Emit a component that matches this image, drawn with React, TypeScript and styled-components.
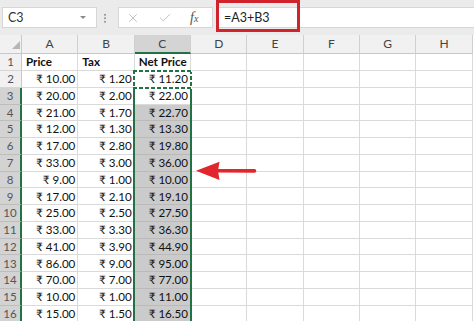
import React from "react";
import styled, { createGlobalStyle, css } from "styled-components";
import { X, Check } from "lucide-react";

const GREEN = "#217346";
const ROW_H = 16.77;
const COL_W = 56.35;
const FONT = `"Lato", "Noto Sans", "DejaVu Sans", sans-serif`;

const Global = createGlobalStyle`
  *, *::before, *::after { box-sizing: border-box; }
  html, body { margin: 0; padding: 0; background: #fff; }
  body { font-family: ${FONT}; }
`;

const Page = styled.div`
  position: relative;
  width: 474px;
  height: 321px;
  overflow: hidden;
  background: #fff;
`;

const Toolbar = styled.div`
  display: flex;
  align-items: center;
  height: 35px;
  padding-left: 2px;
  background: #ebebeb;
`;

const NameBox = styled.div`
  display: flex;
  align-items: center;
  width: 95px;
  height: 21px;
  padding-left: 5px;
  background: #fff;
  border: 1px solid #d6d6d6;
  font-size: 12.5px;
  color: #333;
`;

const Caret = styled.span`
  margin-left: auto;
  margin-right: 10px;
  width: 0;
  height: 0;
  border-left: 3px solid transparent;
  border-right: 3px solid transparent;
  border-top: 3px solid #8a8a8a;
`;

const Grip = styled.span`
  width: 2px;
  height: 10px;
  margin: 0 12px 0 7px;
  background: radial-gradient(circle, #9c9c9c 0.8px, transparent 1.2px) 0 0 / 2px 3.5px repeat-y;
`;

const FuncBox = styled.div`
  display: flex;
  align-items: center;
  gap: 18px;
  width: 95px;
  height: 21px;
  padding-left: 7px;
  background: #fff;
  border: 1px solid #d6d6d6;
  color: #a6a6a6;
`;

const Fx = styled.span`
  display: inline-flex;
  align-items: baseline;
  width: 12px;
  font-family: "Liberation Serif", "DejaVu Serif", serif;
  font-style: italic;
  font-size: 14px;
  color: #555;
  line-height: 1;

  & > small {
    font-size: 10px;
  }
`;

const FormulaBox = styled.div`
  display: flex;
  align-items: center;
  flex: 1;
  height: 21px;
  margin-left: 4px;
  padding-left: 6px;
  background: #fff;
  border: 1px solid #d6d6d6;
  border-right: none;
  font-size: 12.5px;
  color: #222;
`;

const gridTemplate = css`
  display: grid;
  grid-template-columns: 22px repeat(8, ${COL_W}px);
  grid-template-rows: 19.3px repeat(16, ${ROW_H}px);
`;

const SheetStack = styled.div`
  display: grid;
`;

const Sheet = styled.div`
  ${gridTemplate};
  grid-area: 1 / 1;
  font-size: 11.6px;
  line-height: 1;
  color: #111;
`;

const OverlayLayer = styled.div`
  ${gridTemplate};
  grid-area: 1 / 1;
  z-index: 2;
  pointer-events: none;
`;

const Corner = styled.div`
  position: relative;
  background: #f1f1f1;
  border-right: 1px solid #c8c8c8;
  border-bottom: 1px solid #c8c8c8;

  &::after {
    content: "";
    position: absolute;
    right: 1px;
    bottom: 4px;
    border-left: 8px solid transparent;
    border-bottom: 8px solid #b6b6b6;
  }
`;

const ColHeader = styled.div<{ $active?: boolean }>`
  display: flex;
  align-items: center;
  justify-content: center;
  background: ${(p) => (p.$active ? "#d4d4d4" : "#f1f1f1")};
  border-right: 1px solid #d0d0d0;
  border-bottom: ${(p) => (p.$active ? `2px solid ${GREEN}` : "1px solid #c8c8c8")};
  font-size: 12px;
  color: #444;
`;

const RowHeader = styled.div<{ $selected?: boolean }>`
  display: flex;
  align-items: center;
  justify-content: center;
  background: ${(p) => (p.$selected ? "#d3d3d3" : "#f1f1f1")};
  border-right: ${(p) => (p.$selected ? `2px solid ${GREEN}` : "1px solid #c8c8c8")};
  border-bottom: 1px solid ${(p) => (p.$selected ? "#bdbdbd" : "#d6d6d6")};
  font-size: 11.5px;
  color: #555;
`;

const Cell = styled.div<{ $left?: boolean; $bold?: boolean; $shaded?: boolean }>`
  display: flex;
  align-items: center;
  justify-content: ${(p) => (p.$left ? "flex-start" : "flex-end")};
  padding: 0 2px 0 4px;
  background: ${(p) => (p.$shaded ? "#cbcbcb" : "#fff")};
  border-right: 1px solid ${(p) => (p.$shaded ? "#bababa" : "#dadada")};
  border-bottom: 1px solid ${(p) => (p.$shaded ? "#bababa" : "#dadada")};
  font-weight: ${(p) => (p.$bold ? 700 : 400)};
  white-space: nowrap;
  overflow: hidden;
`;

const SelectionFrame = styled.div`
  grid-column: 4;
  grid-row: 4 / 18;
  margin: 0 -0.5px 0 -1.5px;
  border-left: 2px solid ${GREEN};
  border-right: 2px solid ${GREEN};
`;

const dashH = `repeating-linear-gradient(90deg, ${GREEN} 0 4px, #fff 4px 6px)`;
const dashV = `repeating-linear-gradient(180deg, ${GREEN} 0 4px, #fff 4px 6px)`;

const Marquee = styled.div`
  grid-column: 4;
  grid-row: 3;
  margin: -1px -0.5px -1px -1.5px;
  background:
    ${dashH} left top / 100% 2px no-repeat,
    ${dashH} left bottom / 100% 2px no-repeat,
    ${dashV} left top / 2px 100% no-repeat,
    ${dashV} right top / 2px 100% no-repeat;
`;

const RedBox = styled.div`
  position: absolute;
  left: 216px;
  top: 0px;
  width: 84px;
  height: 32px;
  border: 3px solid #d0232b;
  pointer-events: none;
`;

const ArrowSvg = styled.svg`
  position: absolute;
  left: 190px;
  top: 158px;
  pointer-events: none;
`;

const columns = ["A", "B", "C", "D", "E", "F", "G", "H"];

const data: [number, number, number][] = [
  [10, 1.2, 11.2],
  [20, 2, 22],
  [21, 1.7, 22.7],
  [12, 1.3, 13.3],
  [17, 2.8, 19.8],
  [33, 3, 36],
  [9, 1, 10],
  [17, 2.1, 19.1],
  [25, 2.5, 27.5],
  [33, 3.3, 36.3],
  [41, 3.9, 44.9],
  [86, 9, 95],
  [70, 7, 77],
  [10, 1, 11],
  [15, 1.5, 16.5],
];

const rupee = (v: number) => `₹ ${v.toFixed(2)}`;

export default function App() {
  return (
    <>
      <Global />
      <Page>
        <Toolbar>
          <NameBox>
            C3
            <Caret />
          </NameBox>
          <Grip />
          <FuncBox>
            <X size={14} strokeWidth={1.2} />
            <Check size={14} strokeWidth={1.2} />
            <Fx>
              f<small>x</small>
            </Fx>
          </FuncBox>
          <FormulaBox>=A3+B3</FormulaBox>
        </Toolbar>

        <SheetStack>
          <Sheet>
            <Corner />
            {columns.map((c) => (
              <ColHeader key={c} $active={c === "C"}>
                {c}
              </ColHeader>
            ))}

            <RowHeader>1</RowHeader>
            <Cell $left $bold>Price</Cell>
            <Cell $left $bold>Tax</Cell>
            <Cell $left $bold>Net Price</Cell>
            {columns.slice(3).map((c) => (
              <Cell key={`1${c}`} />
            ))}

            {data.map(([a, b, c], i) => {
              const n = i + 2;
              return (
                <React.Fragment key={n}>
                  <RowHeader $selected={n >= 3}>{n}</RowHeader>
                  <Cell>{rupee(a)}</Cell>
                  <Cell>{rupee(b)}</Cell>
                  <Cell $shaded={n >= 4}>{rupee(c)}</Cell>
                  {columns.slice(3).map((col) => (
                    <Cell key={`${n}${col}`} />
                  ))}
                </React.Fragment>
              );
            })}
          </Sheet>

          <OverlayLayer>
            <SelectionFrame />
            <Marquee />
          </OverlayLayer>
        </SheetStack>

        <RedBox />
        <ArrowSvg width="72" height="26" viewBox="0 0 72 26">
          <path d="M6 12.7 L29.5 3.8 L28 12.7 L29.5 22 Z" fill="#e2262d" />
          <line x1="26" y1="12.7" x2="64.5" y2="12.9" stroke="#e2262d" strokeWidth="3.6" strokeLinecap="round" />
        </ArrowSvg>
      </Page>
    </>
  );
}
